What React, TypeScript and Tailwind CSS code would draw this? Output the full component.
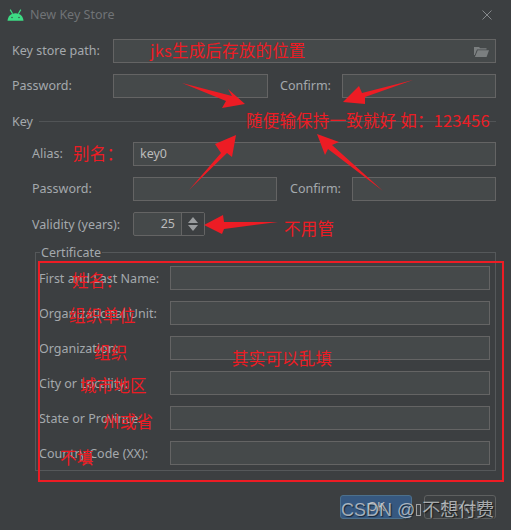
const uiFont = "font-['Noto_Sans','Open_Sans',sans-serif]";
const noteFont = "font-['Noto_Sans_CJK_SC','Noto_Sans',sans-serif] font-normal";

type Note = { text: string; left: number; top: number; size?: number };

// red annotations drawn over the dialog
const notes: Note[] = [
  { text: 'jks生成后存放的位置', left: 150, top: 38 },
  { text: '随便输保持一致就好 如：123456', left: 246, top: 108 },
  { text: '别名：', left: 73, top: 141 },
  { text: '不用管', left: 284, top: 216 },
  { text: '姓名：', left: 72, top: 268 },
  { text: '组织单位', left: 69, top: 303 },
  { text: '组织', left: 94, top: 340 },
  { text: '其实可以乱填', left: 232, top: 346 },
  { text: '城市地区', left: 80, top: 373 },
  { text: '州或省', left: 103, top: 409 },
  { text: '不填', left: 60, top: 445 },
];

const arrows = [
  '182,83 232,96 228,89 245,104 222,108 226,101',
  '413,80 365,97 365,104 343,102 359,86 362,93',
  '189,190 221,153 215,144 236,135 232,157 227,153',
  '383,191 328,149 325,155 317,134 339,142 332,145',
  '204,225 223,215 224,222 278,222 224,229 222,234',
];

const certFields = [
  'First and Last Name:',
  'Organizational Unit:',
  'Organization:',
  'City or Locality:',
  'State or Province:',
  'Country Code (XX):',
];

const Field = ({ className = '', children }: { className?: string; children?: React.ReactNode }) => (
  <div className={`h-6 bg-[#45494a] border border-[#646464] flex items-center text-[#bbbbbb] ${className}`}>
    {children}
  </div>
);

const AndroidIcon = () => (
  <svg width="17" height="12" viewBox="0 0 17 12" fill="#3ddc84">
    <path d="M0.5 11.8 C0.8 7.5 3.5 4.4 8.5 4.2 C13.5 4.4 16.2 7.5 16.5 11.8 Z" />
    <path d="M3.2 0.6 L5.6 4.8 M13.8 0.6 L11.4 4.8" stroke="#3ddc84" strokeWidth="1.2" />
    <circle cx="5" cy="8.5" r="0.7" fill="#3c3f41" />
    <circle cx="12" cy="8.5" r="0.7" fill="#3c3f41" />
  </svg>
);

const FolderIcon = () => (
  <svg width="15" height="11" viewBox="0 0 15 11" fill="#7b7f80">
    <path d="M0 1 H5 L6.2 2.2 H12.5 V3.4 H3 L0.8 9 H0 Z" />
    <path d="M3.7 4.3 H15 L12.6 11 H0.9 Z" />
  </svg>
);

export default function App() {
  return (
    <div className={`relative w-[511px] h-[530px] overflow-hidden bg-[#3c3f41] text-[12.5px] text-[#a4a9ad] ${uiFont}`}>
      {/* title bar */}
      <div className="h-[39px] pl-[7px] pr-[19px] pb-[9px] flex items-center">
        <AndroidIcon />
        <span className="ml-[6px] text-[#707376]">New Key Store</span>
        <svg className="ml-auto" width="10" height="10" viewBox="0 0 10 10" stroke="#85888b" strokeWidth="1">
          <path d="M0.5 0.5 L9.5 9.5 M9.5 0.5 L0.5 9.5" />
        </svg>
      </div>

      <div className="pl-3 pr-[15px]">
        <div className="flex items-center">
          <span className="w-[101px]">Key store path:</span>
          <Field className="flex-1 justify-end pr-[6px]">
            <FolderIcon />
          </Field>
        </div>
        <div className="flex items-center mt-[11px]">
          <span className="w-[101px]">Password:</span>
          <Field className="w-[155px]" />
          <span className="w-[62px] ml-3">Confirm:</span>
          <Field className="flex-1" />
        </div>

        <div className="flex items-center h-5 mt-[14px] mb-[10px]">
          <span>Key</span>
          <div className="flex-1 h-px ml-[6px] bg-[#515456] -translate-y-px" />
        </div>

        <div className="pl-5">
          <div className="flex items-center">
            <span className="w-[101px]">Alias:</span>
            <Field className="flex-1 pl-[6px]">key0</Field>
          </div>
          <div className="flex items-center mt-[11px]">
            <span className="w-[101px]">Password:</span>
            <Field className="w-[144px]" />
            <span className="w-[62px] ml-[13px]">Confirm:</span>
            <Field className="flex-1" />
          </div>
          <div className="flex items-center mt-[11px]">
            <span className="w-[101px] pt-[2px]">Validity (years):</span>
            <div className="w-[72px] h-6 flex bg-[#45494a] border border-[#646464] rounded-[2px] text-[#bbbbbb]">
              <div className="w-[48px] pr-[6px] text-right leading-[22px] border-r border-[#646464]">25</div>
              <div className="flex-1 flex flex-col items-center justify-center gap-[2px] bg-[#3c3f41]">
                <svg width="10" height="6" viewBox="0 0 10 6" fill="#9a9d9f"><path d="M5 0 L10 6 H0 Z" /></svg>
                <svg width="10" height="6" viewBox="0 0 10 6" fill="#9a9d9f"><path d="M0 0 H10 L5 6 Z" /></svg>
              </div>
            </div>
          </div>
        </div>

        <div className="relative ml-[23px] mt-4 h-[219px] border border-[#55585a] pt-[13px] pl-[3px] pr-[5px]">
          <span className="absolute left-[4px] -top-2 px-[1px] leading-[16px] bg-[#3c3f41]">Certificate</span>
          <div className="flex flex-col gap-[11px]">
            {certFields.map((label) => (
              <div key={label} className="flex items-center">
                <span className="w-[131px] pt-[2px] whitespace-nowrap">{label}</span>
                <Field className="flex-1" />
              </div>
            ))}
          </div>
        </div>
      </div>

      <div className="flex justify-end gap-3 pr-[15px] mt-6">
        <div className="w-[72px] h-6 rounded-[3px] bg-[#365880] border border-[#4c708c] text-[#bbbbbb] flex items-center justify-center">OK</div>
        <div className="w-[72px] h-6 rounded-[3px] bg-[#3c3f41] border border-[#5e6060] text-[#8a8d90] flex items-center justify-center">Cancel</div>
      </div>

      {/* annotations pasted over the screenshot */}
      <div className="absolute left-[38px] top-[261px] w-[466px] h-[221px] border-2 border-[#ed1c24]" />
      <div className="absolute left-[83px] top-[453px] w-[9px] h-[11px] bg-[#8a3c3e]" />
      <svg className="absolute left-0 top-0" width="511" height="530" viewBox="0 0 511 530" fill="#ed1c24">
        {arrows.map((points) => (
          <polygon key={points} points={points} />
        ))}
      </svg>
      {notes.map((note) => (
        <span
          key={note.text}
          className={`absolute whitespace-nowrap text-[16.5px] leading-[24px] tracking-[0.2px] text-[#ed1c24] ${noteFont}`}
          style={{ left: note.left, top: note.top }}
        >
          {note.text}
        </span>
      ))}

      {/* watermark */}
      <div className="absolute left-[341px] top-[498px] flex items-center whitespace-nowrap text-[18px] leading-[24px] text-[#dfe1e3]/70 [text-shadow:1px_1px_1px_rgba(0,0,0,0.6)] font-['Liberation_Sans','Noto_Sans_CJK_SC',sans-serif]">
        CSDN @
        <span className="inline-block w-[5px] h-[12px] mx-[1px] border border-[#dfe1e3]/60" />
        不想付费
      </div>
    </div>
  );
}
